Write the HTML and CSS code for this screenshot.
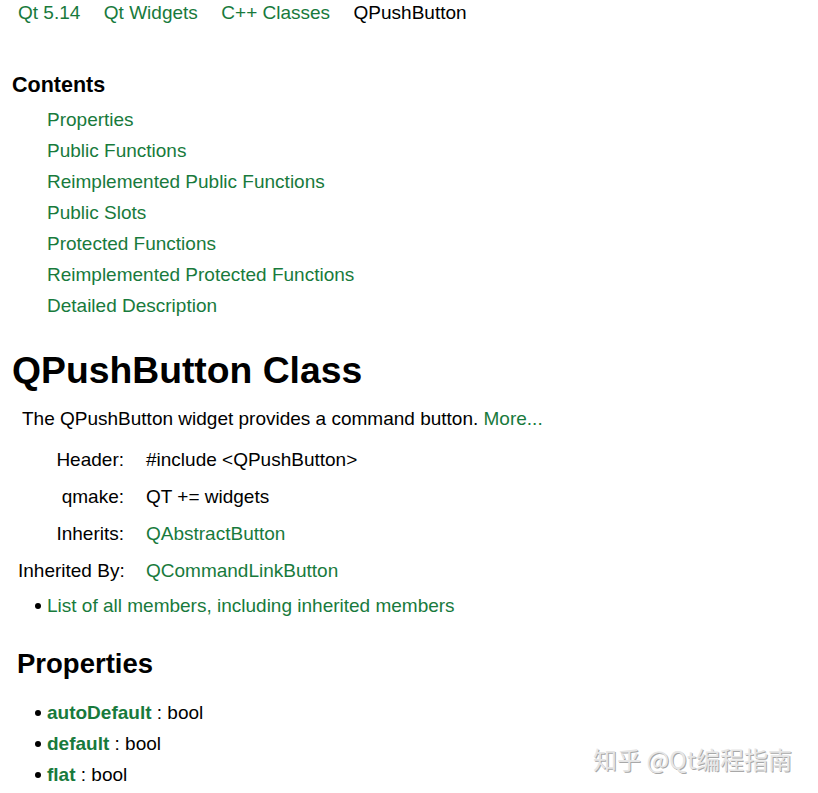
FILE: index.html
```html
<!DOCTYPE html>
<html>
<head>
<meta charset="utf-8">
<link rel="stylesheet" href="styles.css">
</head>
<body>
<nav class="crumbs">
  <a href="#">Qt 5.14</a>
  <a href="#">Qt Widgets</a>
  <a href="#">C++ Classes</a>
  <span>QPushButton</span>
</nav>

<h3 class="toc-title">Contents</h3>
<ul class="toc">
  <li><a href="#">Properties</a></li>
  <li><a href="#">Public Functions</a></li>
  <li><a href="#">Reimplemented Public Functions</a></li>
  <li><a href="#">Public Slots</a></li>
  <li><a href="#">Protected Functions</a></li>
  <li><a href="#">Reimplemented Protected Functions</a></li>
  <li><a href="#">Detailed Description</a></li>
</ul>

<h1 class="title">QPushButton Class</h1>
<p class="brief">The QPushButton widget provides a command button. <a href="#">More...</a></p>

<div class="info">
  <div class="lbl">Header:</div><div class="val">#include &lt;QPushButton&gt;</div>
  <div class="lbl">qmake:</div><div class="val">QT += widgets</div>
  <div class="lbl">Inherits:</div><div class="val"><a href="#">QAbstractButton</a></div>
  <div class="lbl">Inherited By:</div><div class="val"><a href="#">QCommandLinkButton</a></div>
</div>

<ul class="bullets members">
  <li><a href="#">List of all members, including inherited members</a></li>
</ul>

<h2 class="sect">Properties</h2>
<ul class="bullets props">
  <li><a class="prop" href="#">autoDefault</a> : bool</li>
  <li><a class="prop" href="#">default</a> : bool</li>
  <li><a class="prop" href="#">flat</a> : bool</li>
</ul>

<div class="watermark">知乎 @Qt编程指南</div>
</body>
</html>
```

FILE: styles.css
```css
html, body {
  margin: 0;
  padding: 0;
  background: #ffffff;
}
body {
  font-family: "Liberation Sans", Arial, sans-serif;
  font-size: 19px;
  color: #000000;
  position: relative;
  height: 793px;
  overflow: hidden;
}
a {
  color: #187a3c;
  text-decoration: none;
}
.crumbs {
  display: flex;
  gap: 23.5px;
  padding: 1px 0 0 18px;
  line-height: 24px;
  height: 24px;
}
.toc-title {
  margin: 44px 0 0 12px;
  font-size: 21.5px;
  font-weight: bold;
  line-height: 32px;
}
.toc {
  list-style: none;
  margin: 3px 0 0 0;
  padding: 0 0 0 47px;
  line-height: 31px;
}
.title {
  margin: 27px 0 0 12px;
  font-size: 37.3px;
  font-weight: bold;
  line-height: 44px;
}
.brief {
  margin: 15px 0 0 22px;
  line-height: 24px;
}
.info {
  display: grid;
  grid-template-columns: 106px auto;
  column-gap: 22px;
  margin-top: 10px;
  padding-left: 18px;
  line-height: 37px;
}
.lbl {
  text-align: right;
  white-space: nowrap;
}
.val {
  white-space: nowrap;
}
.bullets {
  list-style: none;
  padding: 0 0 0 47px;
  line-height: 31px;
}
.bullets li {
  position: relative;
}
.bullets li::before {
  content: "";
  position: absolute;
  left: -12px;
  top: 13px;
  width: 6px;
  height: 6px;
  border-radius: 50%;
  background: #000;
}
.members {
  margin: 0.5px 0 0 0;
}
.sect {
  margin: 25.5px 0 0 17px;
  font-size: 27.5px;
  font-weight: bold;
  line-height: 36px;
}
.props {
  margin: 15px 0 0 0;
}
.prop {
  font-weight: bold;
}
.watermark {
  position: absolute;
  left: 593px;
  top: 743px;
  font-family: "Noto Sans CJK SC", sans-serif;
  font-size: 24px;
  line-height: 32px;
  color: #e6e6e6;
  text-shadow: 1px 1px 0 #a8a8a8;
}
```
